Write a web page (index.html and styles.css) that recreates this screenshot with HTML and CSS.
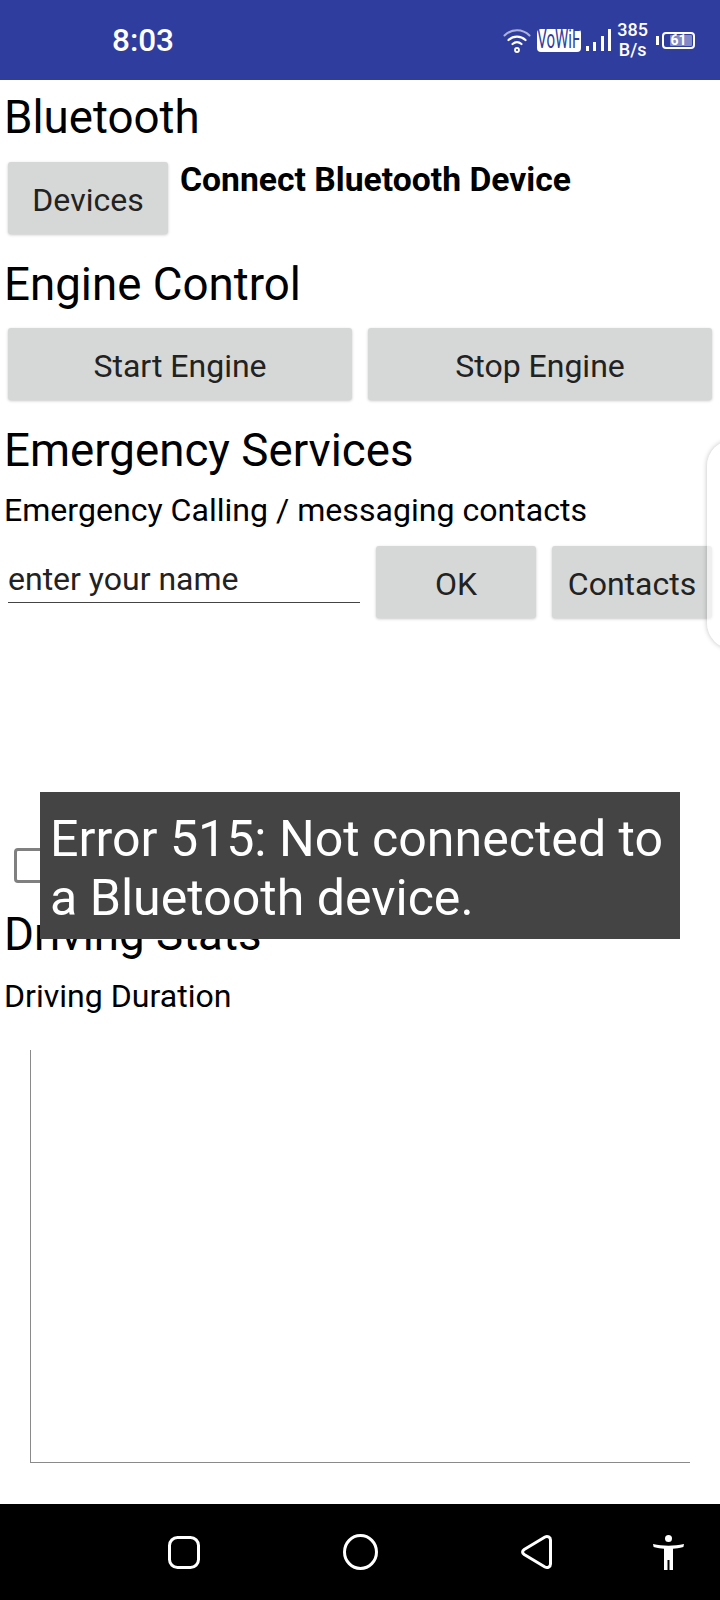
FILE: index.html
```html
<!DOCTYPE html>
<html lang="en">
<head>
    <meta charset="UTF-8">
    <meta name="viewport" content="width=device-width, initial-scale=1.0">
    <title>Bluetooth</title>
    <link rel="stylesheet" href="styles.css">
</head>
<body>
    <div class="status-bar">
        <div class="clock">8:03</div>
        <div class="status-icons">
            <svg class="wifi" width="28" height="25" viewBox="0 0 28 25" fill="none" stroke="#fff" stroke-linecap="round">
                <path d="M1.5 7.5C8.5 0.5 19.5 0.5 26.5 7.5" stroke-width="2" opacity="0.6"/>
                <path d="M5.5 12C10.5 7.5 17.5 7.5 22.5 12" stroke-width="2.2"/>
                <path d="M9.5 16C12.3 13.7 15.7 13.7 18.5 16" stroke-width="2.2"/>
                <circle cx="14" cy="22" r="2" stroke-width="1.8"/>
            </svg>
            <div class="vowifi"><span>VoWiFi</span></div>
            <svg class="signal" width="25" height="22" viewBox="0 0 25 22" fill="#fff">
                <rect x="0" y="17" width="3" height="5"/>
                <rect x="7" y="13" width="3" height="9"/>
                <rect x="15" y="7" width="3" height="15"/>
                <rect x="22" y="0" width="3" height="22"/>
            </svg>
            <div class="speed">385<br>B/s</div>
            <div class="battery-tip"></div>
            <div class="battery"><div class="battery-level"></div><span>61</span></div>
        </div>
    </div>

    <div class="content">
        <h2 class="first-title">Bluetooth</h2>
        <div class="row row-top">
            <button class="btn btn-devices">Devices</button>
            <div class="connect-label">Connect Bluetooth Device</div>
        </div>

        <h2>Engine Control</h2>
        <div class="row">
            <button class="btn btn-wide">Start Engine</button>
            <button class="btn btn-wide">Stop Engine</button>
        </div>

        <h2>Emergency Services</h2>
        <div class="sub-label">Emergency Calling / messaging contacts</div>
        <div class="row row-name">
            <div class="name-input">enter your name</div>
            <button class="btn btn-ok">OK</button>
            <button class="btn btn-contacts">Contacts</button>
        </div>

        <div class="check-row"><div class="checkbox"></div></div>

        <h2 class="stats-title">Driving Stats</h2>
        <div class="sub-label stats-label">Driving Duration</div>
        <div class="chart"></div>
    </div>

    <div class="nav-bar">
        <svg class="nav-square" width="32" height="33" viewBox="0 0 32 33" fill="none" stroke="#fff" stroke-width="3"><rect x="1.5" y="1.5" width="29" height="30" rx="8"/></svg>
        <svg class="nav-circle" width="35" height="36" viewBox="0 0 35 36" fill="none" stroke="#fff" stroke-width="3"><ellipse cx="17.5" cy="18" rx="16" ry="16.5"/></svg>
        <svg class="nav-back" width="31" height="34" viewBox="0 0 31 34" fill="none" stroke="#fff" stroke-width="3" stroke-linejoin="round"><path d="M3.2 14.5L24 2C26.5 0.8 29.5 2 29.5 5V29C29.5 32 26.5 33.2 24 32L3.2 19.5C1 18 1 16 3.2 14.5Z"/></svg>
        <svg class="nav-access" width="33" height="35" viewBox="0 0 33 35" fill="#fff"><circle cx="16.5" cy="3.5" r="3.5"/><path d="M1 9L1.6 12C6 13 9 13.5 12 13.8V35H15.5V25H17.5V35H21V13.8C24 13.5 27 13 31.4 12L32 9C22 11.2 11 11.2 1 9Z"/></svg>
    </div>

    <div class="side-panel"></div>
    <div class="toast">Error 515: Not connected to a Bluetooth device.</div>
</body>
</html>
```

FILE: styles.css
```css
html, body {
    margin: 0;
    padding: 0;
}
body {
    width: 720px;
    height: 1600px;
    position: relative;
    overflow: hidden;
    display: flex;
    flex-direction: column;
    background-color: #ffffff;
    color: #000000;
    font-family: Roboto, sans-serif;
}

/* status bar */
.status-bar {
    height: 80px;
    flex-shrink: 0;
    display: flex;
    align-items: center;
    justify-content: space-between;
    padding: 0 25px 0 112px;
    box-sizing: border-box;
    background-color: #2f3e9e;
    color: #ffffff;
}
.clock {
    font-size: 31.5px;
    font-weight: 500;
}
.status-icons {
    display: flex;
    align-items: center;
}
.wifi {
    margin-right: 6px;
}
.vowifi {
    width: 44px;
    height: 23px;
    border-radius: 4px;
    background-color: #ffffff;
    color: #2f3e9e;
    font-size: 15px;
    line-height: 23px;
    text-align: center;
}
.vowifi span {
    display: block;
    transform: scaleY(1.7);
}
.signal {
    margin-left: 5px;
}
.speed {
    margin-left: 6px;
    font-size: 18px;
    font-weight: 500;
    line-height: 20px;
    text-align: center;
}
.battery-tip {
    width: 3px;
    height: 9px;
    margin-left: 8px;
    background-color: #ffffff;
}
.battery {
    position: relative;
    width: 29px;
    height: 13px;
    margin-left: 3px;
    border: 2px solid #ffffff;
    border-radius: 4px;
    font-size: 14px;
    font-weight: 700;
    line-height: 13px;
    text-align: center;
}
.battery span {
    position: relative;
}
.battery-level {
    position: absolute;
    top: 1px;
    bottom: 1px;
    right: 1px;
    width: 22px;
    background-color: #7f8ac6;
    border-radius: 1px;
}

/* page */
.content {
    flex: 1;
    padding: 0 4px;
}
h2 {
    margin: 14px 0 0;
    font-size: 45.7px;
    font-weight: 400;
    line-height: 74px;
}
.first-title {
    margin-top: 1px;
}
.row {
    display: flex;
    gap: 16px;
    margin-top: 6px;
    padding: 0 4px;
}
.row-top {
    gap: 12px;
    margin-top: 7px;
}
.btn {
    height: 72px;
    padding: 4px 0 0;
    border: none;
    border-radius: 3px;
    background-color: #d6d7d7;
    color: #222222;
    font-family: Roboto, sans-serif;
    font-size: 32px;
    box-shadow: 0 1px 3px rgba(0, 0, 0, 0.22);
}
.btn-devices {
    width: 160px;
}
.connect-label {
    padding-top: 1px;
    font-size: 33.7px;
    font-weight: 700;
    line-height: 34px;
}
.btn-wide {
    width: 344px;
}
.sub-label {
    margin-top: 2px;
    font-size: 32.1px;
    line-height: 40px;
}
.stats-label {
    margin-top: 4px;
}
.row-name {
    margin-top: 16px;
}
.name-input {
    width: 352px;
    height: 50px;
    padding-top: 6px;
    border-bottom: 1px solid #444444;
    color: #222222;
    font-size: 32px;
    line-height: 54px;
}
.btn-ok {
    width: 160px;
}
.btn-contacts {
    width: 160px;
}
.check-row {
    padding: 230px 0 0 10px;
}
.checkbox {
    width: 29px;
    height: 29px;
    border: 3px solid #808080;
    border-radius: 4px;
}
h2.stats-title {
    margin-top: 15px;
}
.chart {
    height: 412px;
    margin: 34px 26px 0;
    border-left: 1px solid #8a8a8a;
    border-bottom: 1px solid #8a8a8a;
}

/* nav */
.nav-bar {
    height: 96px;
    flex-shrink: 0;
    display: flex;
    align-items: center;
    padding: 0 20px 0 168px;
    background-color: #000000;
}
.nav-circle {
    margin-left: 143px;
}
.nav-back {
    margin-left: 143px;
}
.nav-access {
    margin-left: 100px;
}

/* overlays */
.side-panel {
    position: absolute;
    top: 440px;
    left: 707px;
    width: 40px;
    height: 209px;
    border-radius: 26px 0 0 26px;
    background-color: rgba(255, 255, 255, 0.6);
    box-shadow: 0 0 5px rgba(0, 0, 0, 0.25);
}
.toast {
    position: absolute;
    top: 792px;
    left: 40px;
    width: 640px;
    height: 147px;
    padding: 18px 10px 0;
    box-sizing: border-box;
    background-color: #444444;
    color: #ffffff;
    font-size: 50.1px;
    line-height: 59px;
}
```
